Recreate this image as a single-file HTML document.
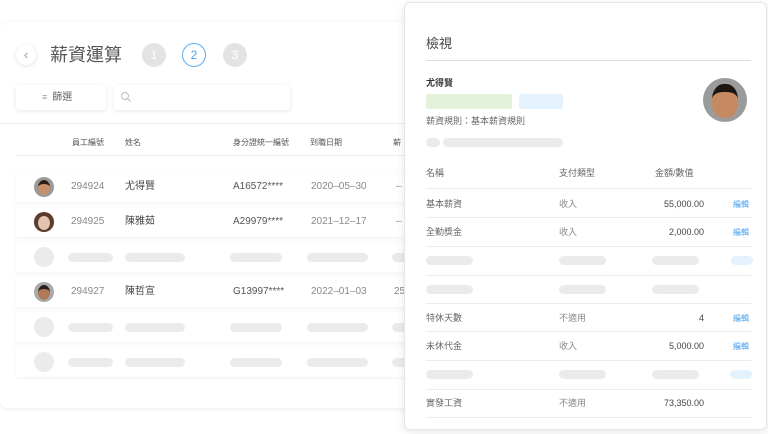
<!DOCTYPE html>
<html><head><meta charset="utf-8"><style>
*{box-sizing:border-box;margin:0;padding:0}
body{width:768px;height:434px;background:#fff;font-family:"Liberation Sans","Noto Sans CJK TC",sans-serif;position:relative;overflow:hidden;color:#555}
.a{position:absolute}
.card{left:0;top:22px;width:420px;height:386px;background:#fff;border-radius:8px;box-shadow:0 1px 6px rgba(0,0,0,.08)}
.row{position:absolute;left:16px;width:400px;height:30px;background:#fff;box-shadow:0 1px 4px rgba(0,0,0,.06)}
.t{position:absolute;font-size:10px;line-height:12px;height:12px;white-space:nowrap}
.sk{position:absolute;height:9px;border-radius:5px;background:#ebebeb}
.av{position:absolute;width:20px;height:20px;border-radius:50%;overflow:hidden}
.panel{left:404px;top:2px;width:363px;height:428px;background:#fff;border:1px solid #e6e6ea;border-radius:6px;box-shadow:0 2px 10px rgba(0,0,0,.1)}
.ln{position:absolute;left:21px;width:325px;height:1px;background:#ececec}
.pt{position:absolute;font-size:9px;line-height:11px;height:11px;color:#666;white-space:nowrap}
.ed{position:absolute;left:328px;font-size:8px;line-height:10px;color:#4aa3f0}
</style></head><body>
<div class="a card"></div>
<div class="a" style="left:16px;top:45px;width:20px;height:20px;border-radius:50%;background:#fff;box-shadow:0 1px 4px rgba(0,0,0,.12);color:#999;font-size:13px;text-align:center;line-height:19px">‹</div>
<div class="a" style="left:50px;top:44px;font-size:18px;line-height:22px;color:#555">薪資運算</div>
<div class="a" style="left:142px;top:43px;width:24px;height:24px;border-radius:50%;background:#e3e3e3;color:#fff;font-size:12px;text-align:center;line-height:24px">1</div>
<div class="a" style="left:182px;top:43px;width:24px;height:24px;border-radius:50%;border:1px solid #5aaef5;color:#4aa3f0;font-size:12px;text-align:center;line-height:22px">2</div>
<div class="a" style="left:223px;top:43px;width:24px;height:24px;border-radius:50%;background:#e3e3e3;color:#fff;font-size:12px;text-align:center;line-height:24px">3</div>
<div class="a" style="left:16px;top:85px;width:90px;height:25px;background:#fff;box-shadow:0 1px 4px rgba(0,0,0,.1);border-radius:3px;font-size:10px;color:#666;line-height:25px;padding-left:26px"><span style="font-size:9px;color:#999;margin-right:5px">≡</span>篩選</div>
<div class="a" style="left:114px;top:85px;width:176px;height:25px;background:#fff;box-shadow:0 1px 4px rgba(0,0,0,.1);border-radius:3px"><svg width="12" height="12" style="position:absolute;left:6px;top:6px"><circle cx="5" cy="5" r="3.5" fill="none" stroke="#bbb" stroke-width="1"/><line x1="7.6" y1="7.6" x2="10.5" y2="10.5" stroke="#bbb"/></svg></div>
<div class="a" style="left:0;top:123px;width:404px;height:1px;background:#eee"></div>
<div class="t" style="left:72px;top:137px;font-size:8px">員工編號</div>
<div class="t" style="left:125px;top:137px;font-size:8px">姓名</div>
<div class="t" style="left:233px;top:137px;font-size:8px">身分證統一編號</div>
<div class="t" style="left:310px;top:137px;font-size:8px">到職日期</div>
<div class="t" style="left:393px;top:137px;font-size:8px">薪</div>
<div class="a" style="left:16px;top:155px;width:390px;height:1px;background:#eee"></div>

<div class="row" style="top:172px"></div>
<div class="row" style="top:207px"></div>
<div class="row" style="top:242px"></div>
<div class="row" style="top:277px"></div>
<div class="row" style="top:312px"></div>
<div class="row" style="top:347px"></div>

<div class="av" style="left:34px;top:177px;background:#9a9a9a"><div style="position:absolute;left:4px;top:3px;width:12px;height:15px;border-radius:50%;background:#c98e6a;border-top:4px solid #2a1e18"></div></div>
<div class="t" style="left:71px;top:181px;color:#888">294924</div><div class="t" style="left:125px;top:181px;color:#444">尤得賢</div><div class="t" style="left:233px;top:181px;color:#555">A16572****</div><div class="t" style="left:311px;top:181px;color:#888">2020–05–30</div><div class="t" style="left:396px;top:181px;color:#999">–</div>
<div class="av" style="left:34px;top:212px;background:#5a3a2a"><div style="position:absolute;left:4px;top:4px;width:12px;height:14px;border-radius:50%;background:#e3c2b0"></div></div>
<div class="t" style="left:71px;top:216px;color:#888">294925</div><div class="t" style="left:125px;top:216px;color:#444">陳雅茹</div><div class="t" style="left:233px;top:216px;color:#555">A29979****</div><div class="t" style="left:311px;top:216px;color:#888">2021–12–17</div><div class="t" style="left:396px;top:216px;color:#999">–</div>
<div class="av" style="left:34px;top:282px;background:#aaa"><div style="position:absolute;left:4px;top:3px;width:12px;height:15px;border-radius:50%;background:#b07a5a;border-top:4px solid #2a1e18"></div></div>
<div class="t" style="left:71px;top:286px;color:#888">294927</div><div class="t" style="left:125px;top:286px;color:#444">陳哲宣</div><div class="t" style="left:233px;top:286px;color:#555">G13997****</div><div class="t" style="left:311px;top:286px;color:#888">2022–01–03</div><div class="t" style="left:394px;top:286px;color:#888">25</div>

<div class="av" style="left:34px;top:247px;background:#ebebeb"></div>
<div class="sk" style="left:68px;top:253px;width:45px"></div><div class="sk" style="left:125px;top:253px;width:60px"></div><div class="sk" style="left:230px;top:253px;width:52px"></div><div class="sk" style="left:307px;top:253px;width:61px"></div><div class="sk" style="left:392px;top:253px;width:20px"></div>
<div class="av" style="left:34px;top:317px;background:#ebebeb"></div>
<div class="sk" style="left:68px;top:323px;width:45px"></div><div class="sk" style="left:125px;top:323px;width:60px"></div><div class="sk" style="left:230px;top:323px;width:52px"></div><div class="sk" style="left:307px;top:323px;width:61px"></div><div class="sk" style="left:392px;top:323px;width:20px"></div>
<div class="av" style="left:34px;top:352px;background:#ebebeb"></div>
<div class="sk" style="left:68px;top:358px;width:45px"></div><div class="sk" style="left:125px;top:358px;width:60px"></div><div class="sk" style="left:230px;top:358px;width:52px"></div><div class="sk" style="left:307px;top:358px;width:61px"></div><div class="sk" style="left:392px;top:358px;width:20px"></div>

<div class="a panel">
<div class="a" style="left:21px;top:33px;font-size:13px;line-height:16px;color:#444">檢視</div>
<div class="ln" style="top:57px;background:#ddd"></div>
<div class="a" style="left:21px;top:75px;font-size:9px;line-height:11px;color:#333;font-weight:bold">尤得賢</div>
<div class="a" style="left:21px;top:91px;width:86px;height:15px;background:#e3f2d9;border-radius:2px"></div>
<div class="a" style="left:114px;top:91px;width:44px;height:15px;background:#e3f2fc;border-radius:2px"></div>
<div class="a" style="left:21px;top:113px;font-size:9px;line-height:11px;color:#666">薪資規則：基本薪資規則</div>
<div class="sk" style="left:21px;top:135px;width:14px"></div><div class="sk" style="left:38px;top:135px;width:120px"></div>
<div class="a" style="left:298px;top:75px;width:44px;height:44px;border-radius:50%;background:#9b9b9b;overflow:hidden"><div style="position:absolute;left:9px;top:6px;width:26px;height:34px;border-radius:45%;background:#c68a62;border-top:8px solid #1e1612"></div></div>
<div class="pt" style="left:21px;top:165px">名稱</div><div class="pt" style="left:154px;top:165px">支付類型</div><div class="pt" style="left:250px;top:165px">金額/數值</div>
<div class="ln" style="top:185px"></div>
<div class="pt" style="left:21px;top:196px">基本薪資</div><div class="pt" style="left:154px;top:196px;color:#888">收入</div><div class="pt" style="left:240px;width:59px;text-align:right;top:196px;color:#444">55,000.00</div><div class="ed" style="top:197px">編輯</div>
<div class="ln" style="top:214px"></div>
<div class="pt" style="left:21px;top:224px">全勤獎金</div><div class="pt" style="left:154px;top:224px;color:#888">收入</div><div class="pt" style="left:240px;width:59px;text-align:right;top:224px;color:#444">2,000.00</div><div class="ed" style="top:225px">編輯</div>
<div class="ln" style="top:243px"></div>
<div class="sk" style="left:21px;top:253px;width:47px"></div><div class="sk" style="left:154px;top:253px;width:47px"></div><div class="sk" style="left:247px;top:253px;width:47px"></div><div class="sk" style="left:326px;top:253px;width:22px;background:#e3f2fc"></div>
<div class="ln" style="top:272px"></div>
<div class="sk" style="left:21px;top:282px;width:47px"></div><div class="sk" style="left:154px;top:282px;width:47px"></div><div class="sk" style="left:247px;top:282px;width:47px"></div>
<div class="ln" style="top:300px"></div>
<div class="pt" style="left:21px;top:310px">特休天數</div><div class="pt" style="left:154px;top:310px;color:#888">不適用</div><div class="pt" style="left:240px;width:59px;text-align:right;top:310px;color:#444">4</div><div class="ed" style="top:311px">編輯</div>
<div class="ln" style="top:328px"></div>
<div class="pt" style="left:21px;top:338px">未休代金</div><div class="pt" style="left:154px;top:338px;color:#888">收入</div><div class="pt" style="left:240px;width:59px;text-align:right;top:338px;color:#444">5,000.00</div><div class="ed" style="top:339px">編輯</div>
<div class="ln" style="top:357px"></div>
<div class="sk" style="left:21px;top:367px;width:47px"></div><div class="sk" style="left:154px;top:367px;width:47px"></div><div class="sk" style="left:247px;top:367px;width:47px"></div><div class="sk" style="left:325px;top:367px;width:22px;background:#e3f2fc"></div>
<div class="ln" style="top:386px"></div>
<div class="pt" style="left:21px;top:395px">實發工資</div><div class="pt" style="left:154px;top:395px;color:#888">不適用</div><div class="pt" style="left:240px;width:59px;text-align:right;top:395px;color:#444">73,350.00</div>
<div class="ln" style="top:414px"></div>
</div>
</body></html>
